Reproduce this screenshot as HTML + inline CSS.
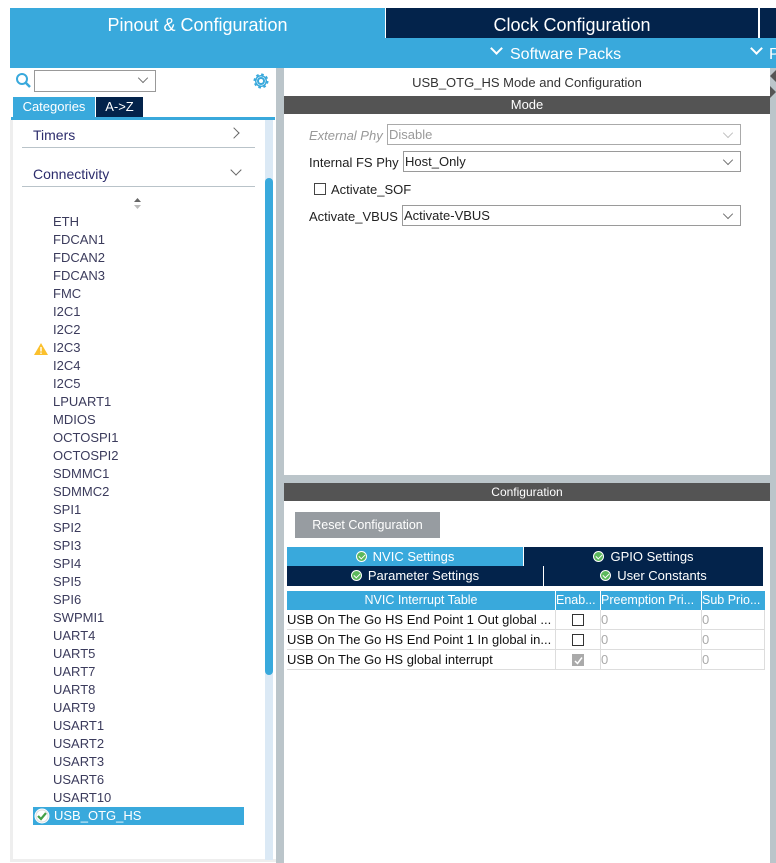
<!DOCTYPE html>
<html><head><meta charset="utf-8"><style>
*{margin:0;padding:0;box-sizing:border-box}
body{width:776px;height:863px;overflow:hidden;background:#fff;font-family:"Liberation Sans",sans-serif;position:relative;font-size:13px;color:#3b3b5c}
.a{position:absolute}
.c{text-align:center}
.sel{position:absolute;border:1px solid #9a9a9a;background:#fff;height:21px;font-size:13px;line-height:19px;padding-left:1px;color:#222}
.chev{position:absolute;right:8px;top:4px;width:8px;height:8px;border-right:1px solid #666;border-bottom:1px solid #666;transform:rotate(45deg) scale(.9)}
.item{position:absolute;left:53px;font-size:13px;color:#3b3b5c}
.cb{position:absolute;width:12px;height:12px;border:1px solid #333;background:#fff}
.tab{position:absolute;color:#fff;font-size:13px;text-align:center;line-height:19px}
.ok{display:inline-block;width:11px;height:11px;border-radius:50%;background:#5cb85c;border:1px solid #fff;vertical-align:-1px;margin-right:6px;position:relative}
.ok:after{content:"";position:absolute;left:3px;top:1px;width:3px;height:5px;border-right:1.5px solid #fff;border-bottom:1.5px solid #fff;transform:rotate(45deg)}
.cell{position:absolute;height:20px;line-height:20px;border-right:1px solid #ddd;border-bottom:1px solid #ddd;font-size:13px;color:#111;overflow:hidden;white-space:nowrap}
</style></head><body>
<div class="a" style="left:10px;top:8px;width:375px;height:60px;background:#39a9dc"></div>
<div class="a c" style="left:10px;top:15px;width:375px;color:#fff;font-size:18px">Pinout &amp; Configuration</div>
<div class="a" style="left:386px;top:8px;width:372px;height:30px;background:#03234b"></div>
<div class="a c" style="left:386px;top:15px;width:372px;color:#fff;font-size:18px">Clock Configuration</div>
<div class="a" style="left:760px;top:8px;width:16px;height:30px;background:#03234b"></div>
<div class="a" style="left:385px;top:38px;width:391px;height:30px;background:#39a9dc"></div>
<div class="a" style="left:492px;top:44px;width:9px;height:9px;border-right:2px solid #fff;border-bottom:2px solid #fff;transform:rotate(45deg)"></div>
<div class="a" style="left:510px;top:46px;color:#fff;font-size:16px">Software Packs</div>
<div class="a" style="left:752px;top:44px;width:9px;height:9px;border-right:2px solid #fff;border-bottom:2px solid #fff;transform:rotate(45deg)"></div>
<div class="a" style="left:769px;top:46px;color:#fff;font-size:16px">P</div>

<svg class="a" style="left:15px;top:72px" width="18" height="18"><circle cx="7" cy="7" r="5" fill="none" stroke="#39a9dc" stroke-width="2"/><line x1="11" y1="11" x2="15" y2="15" stroke="#39a9dc" stroke-width="2.5"/></svg>
<div class="a" style="left:34px;top:70px;width:122px;height:22px;border:1px solid #999;background:#fff"><div class="chev" style="top:3px"></div></div>
<svg class="a" style="left:252px;top:72px" width="18" height="18" viewBox="0 0 18 18"><g fill="none" stroke="#39a9dc" stroke-width="2"><circle cx="9" cy="9" r="3"/><circle cx="9" cy="9" r="6" stroke-dasharray="2.4 2.3" stroke-width="3"/><circle cx="9" cy="9" r="5.3" stroke-width="1.4"/></g></svg>
<div class="tab" style="left:13px;top:97px;width:82px;height:20px;background:#39a9dc">Categories</div>
<div class="tab" style="left:96px;top:97px;width:47px;height:20px;background:#03234b">A-&gt;Z</div>
<div class="a" style="left:11px;top:117px;width:264px;height:3px;background:#39a9dc"></div>
<div class="a" style="left:10px;top:120px;width:3px;height:742px;background:#eee"></div>
<div class="a" style="left:10px;top:859px;width:266px;height:3px;background:#eee"></div>
<div class="a" style="left:265px;top:120px;width:8px;height:740px;background:#dbe9f5"></div>
<div class="a" style="left:265px;top:178px;width:8px;height:497px;background:#39a9dc;border-radius:4px"></div>
<div class="a" style="left:276px;top:68px;width:8px;height:795px;background:#bbc5ca"></div>

<div class="a" style="left:33px;top:127px;font-size:14px;color:#2c2c6c">Timers</div>
<div class="a" style="left:230px;top:129px;width:8px;height:8px;border-right:1px solid #666;border-top:1px solid #666;transform:rotate(45deg)"></div>
<div class="a" style="left:22px;top:147px;width:233px;height:1px;background:#b9c3c9"></div>
<div class="a" style="left:33px;top:166px;font-size:14px;color:#2c2c6c">Connectivity</div>
<div class="a" style="left:232px;top:166px;width:8px;height:8px;border-right:1px solid #666;border-bottom:1px solid #666;transform:rotate(45deg)"></div>
<div class="a" style="left:22px;top:186px;width:233px;height:1px;background:#b9c3c9"></div>
<svg class="a" style="left:133px;top:198px" width="9" height="12"><path d="M4.5 0 L8 4 H1Z" fill="#666"/><path d="M4.5 11 L8 7 H1Z" fill="#bbb"/></svg>

<div class="item" style="top:214px">ETH</div>
<div class="item" style="top:232px">FDCAN1</div>
<div class="item" style="top:250px">FDCAN2</div>
<div class="item" style="top:268px">FDCAN3</div>
<div class="item" style="top:286px">FMC</div>
<div class="item" style="top:304px">I2C1</div>
<div class="item" style="top:322px">I2C2</div>
<svg class="a" style="left:34px;top:343px" width="14" height="12"><path d="M7 0 L14 12 H0Z" fill="#fbc02d"/><rect x="6.3" y="4" width="1.4" height="4.5" fill="#fff"/><rect x="6.3" y="9.5" width="1.4" height="1.4" fill="#fff"/></svg>
<div class="item" style="top:340px">I2C3</div>
<div class="item" style="top:358px">I2C4</div>
<div class="item" style="top:376px">I2C5</div>
<div class="item" style="top:394px">LPUART1</div>
<div class="item" style="top:412px">MDIOS</div>
<div class="item" style="top:430px">OCTOSPI1</div>
<div class="item" style="top:448px">OCTOSPI2</div>
<div class="item" style="top:466px">SDMMC1</div>
<div class="item" style="top:484px">SDMMC2</div>
<div class="item" style="top:502px">SPI1</div>
<div class="item" style="top:520px">SPI2</div>
<div class="item" style="top:538px">SPI3</div>
<div class="item" style="top:556px">SPI4</div>
<div class="item" style="top:574px">SPI5</div>
<div class="item" style="top:592px">SPI6</div>
<div class="item" style="top:610px">SWPMI1</div>
<div class="item" style="top:628px">UART4</div>
<div class="item" style="top:646px">UART5</div>
<div class="item" style="top:664px">UART7</div>
<div class="item" style="top:682px">UART8</div>
<div class="item" style="top:700px">UART9</div>
<div class="item" style="top:718px">USART1</div>
<div class="item" style="top:736px">USART2</div>
<div class="item" style="top:754px">USART3</div>
<div class="item" style="top:772px">USART6</div>
<div class="item" style="top:790px">USART10</div>
<div class="a" style="left:33px;top:807px;width:211px;height:18px;background:#39a9dc"></div>
<svg class="a" style="left:34px;top:808px" width="16" height="16"><circle cx="8" cy="8" r="7.5" fill="#fff"/><circle cx="8" cy="8" r="6" fill="#fff" stroke="#ddd"/><path d="M4 8 L7 11 L12 5" fill="none" stroke="#43a047" stroke-width="2.2"/></svg>
<div class="item" style="top:808px;left:54px;color:#fff">USB_OTG_HS</div>

<div class="a" style="left:770px;top:68px;width:6px;height:795px;background:#bbc5ca"></div>
<svg class="a" style="left:770px;top:70px" width="6" height="30"><path d="M6 0 L0 6 L6 12Z M0 16 L6 22 L0 28Z" fill="#555"/></svg>
<div class="a c" style="left:284px;top:75px;width:486px;font-size:13px;color:#333">USB_OTG_HS Mode and Configuration</div>
<div class="a c" style="left:284px;top:96px;width:486px;height:18px;background:#545454;color:#fff;font-size:13px;line-height:18px">Mode</div>
<div class="a" style="left:309px;top:128px;font-style:italic;color:#999">External Phy</div>
<div class="sel" style="left:387px;top:124px;width:354px;color:#999;border-color:#aaa">Disable<div class="chev" style="border-color:#bbb"></div></div>
<div class="a" style="left:309px;top:155px;color:#222">Internal FS Phy</div>
<div class="sel" style="left:403px;top:151px;width:338px">Host_Only<div class="chev"></div></div>
<div class="cb" style="left:314px;top:183px;border-color:#444"></div>
<div class="a" style="left:331px;top:182px;color:#222">Activate_SOF</div>
<div class="a" style="left:309px;top:209px;color:#222">Activate_VBUS</div>
<div class="sel" style="left:402px;top:205px;width:339px">Activate-VBUS<div class="chev"></div></div>

<div class="a" style="left:284px;top:475px;width:486px;height:8px;background:#bbc5ca"></div>
<div class="a c" style="left:284px;top:483px;width:486px;height:18px;background:#545454;color:#fff;font-size:12px;line-height:18px">Configuration</div>
<div class="a c" style="left:295px;top:512px;width:145px;height:26px;background:#979ca1;color:#fff;font-size:12.5px;line-height:26px">Reset Configuration</div>
<div class="tab" style="left:287px;top:547px;width:236px;background:#39a9dc"><span class="ok"></span>NVIC Settings</div>
<div class="tab" style="left:524px;top:547px;width:239px;background:#03234b"><span class="ok"></span>GPIO Settings</div>
<div class="tab" style="left:287px;top:566px;width:256px;height:20px;background:#03234b"><span class="ok"></span>Parameter Settings</div>
<div class="tab" style="left:544px;top:566px;width:219px;height:20px;background:#03234b"><span class="ok"></span>User Constants</div>

<div class="tab" style="left:287px;top:591px;width:268px;background:#39a9dc;font-size:12.5px">NVIC Interrupt Table</div>
<div class="tab" style="left:556px;top:591px;width:44px;background:#39a9dc;font-size:12.5px;text-align:left;overflow:hidden;white-space:nowrap">Enab...</div>
<div class="tab" style="left:601px;top:591px;width:100px;background:#39a9dc;font-size:12.5px;text-align:left;overflow:hidden;white-space:nowrap">Preemption Pri...</div>
<div class="tab" style="left:702px;top:591px;width:63px;background:#39a9dc;font-size:12.5px;text-align:left;overflow:hidden;white-space:nowrap">Sub Prio...</div>

<div class="cell" style="left:287px;top:610px;width:269px">USB On The Go HS End Point 1 Out global ...</div>
<div class="cell" style="left:556px;top:610px;width:45px"><div class="cb" style="left:16px;top:4px"></div></div>
<div class="cell" style="left:601px;top:610px;width:101px;color:#aaa">0</div>
<div class="cell" style="left:702px;top:610px;width:63px;color:#aaa">0</div>
<div class="cell" style="left:287px;top:630px;width:269px">USB On The Go HS End Point 1 In global in...</div>
<div class="cell" style="left:556px;top:630px;width:45px"><div class="cb" style="left:16px;top:4px"></div></div>
<div class="cell" style="left:601px;top:630px;width:101px;color:#aaa">0</div>
<div class="cell" style="left:702px;top:630px;width:63px;color:#aaa">0</div>
<div class="cell" style="left:287px;top:650px;width:269px">USB On The Go HS global interrupt</div>
<div class="cell" style="left:556px;top:650px;width:45px"><div class="cb" style="left:16px;top:4px;background:#aaa;border-color:#aaa"></div><svg class="a" style="left:17px;top:5px" width="11" height="11"><path d="M2 6 L4.5 8.5 L9 2.5" fill="none" stroke="#fff" stroke-width="1.5"/></svg></div>
<div class="cell" style="left:601px;top:650px;width:101px;color:#aaa">0</div>
<div class="cell" style="left:702px;top:650px;width:63px;color:#aaa">0</div>
</body></html>
